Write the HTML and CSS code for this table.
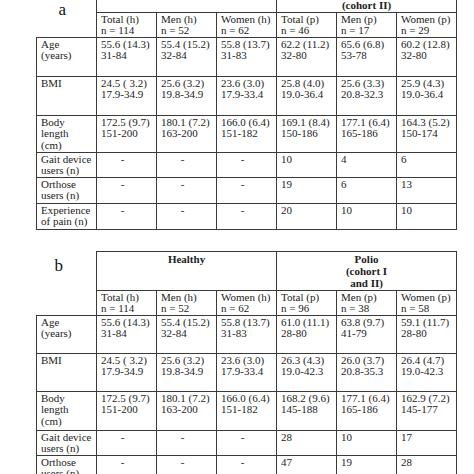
FILE: index.html
```html
<!DOCTYPE html>
<html>
<head>
<meta charset="utf-8">
<link rel="stylesheet" href="styles.css">
</head>
<body>
<div class="page">
  <table class="grid grid-a">
    <colgroup>
      <col class="c-label"><col class="c-data"><col class="c-data"><col class="c-data"><col class="c-data"><col class="c-data"><col class="c-last">
    </colgroup>
    <tr class="h-cut">
      <td class="tag tag-a" rowspan="2">a</td>
      <td class="group no-top" colspan="3"></td>
      <td class="group no-top" colspan="3">(cohort II)</td>
    </tr>
    <tr class="h24">
      <td>Total (h)<br>n = 114</td>
      <td>Men (h)<br>n = 52</td>
      <td>Women (h)<br>n = 62</td>
      <td>Total (p)<br>n = 46</td>
      <td>Men (p)<br>n = 17</td>
      <td>Women (p)<br>n = 29</td>
    </tr>
    <tr class="h39">
      <td>Age<br>(years)</td>
      <td>55.6 (14.3)<br>31-84</td>
      <td>55.4 (15.2)<br>32-84</td>
      <td>55.8 (13.7)<br>31-83</td>
      <td>62.2 (11.2)<br>32-80</td>
      <td>65.6 (6.8)<br>53-78</td>
      <td>60.2 (12.8)<br>32-80</td>
    </tr>
    <tr class="h39">
      <td>BMI</td>
      <td>24.5 ( 3.2)<br>17.9-34.9</td>
      <td>25.6 (3.2)<br>19.8-34.9</td>
      <td>23.6 (3.0)<br>17.9-33.4</td>
      <td>25.8 (4.0)<br>19.0-36.4</td>
      <td>25.6 (3.3)<br>20.8-32.3</td>
      <td>25.9 (4.3)<br>19.0-36.4</td>
    </tr>
    <tr class="h37">
      <td>Body<br>length<br>(cm)</td>
      <td>172.5 (9.7)<br>151-200</td>
      <td>180.1 (7.2)<br>163-200</td>
      <td>166.0 (6.4)<br>151-182</td>
      <td>169.1 (8.4)<br>150-186</td>
      <td>177.1 (6.4)<br>165-186</td>
      <td>164.3 (5.2)<br>150-174</td>
    </tr>
    <tr class="h25">
      <td>Gait device<br>users (n)</td>
      <td class="dash">-</td>
      <td class="dash">-</td>
      <td class="dash">-</td>
      <td>10</td>
      <td>4</td>
      <td>6</td>
    </tr>
    <tr class="h26">
      <td>Orthose<br>users (n)</td>
      <td class="dash">-</td>
      <td class="dash">-</td>
      <td class="dash">-</td>
      <td>19</td>
      <td>6</td>
      <td>13</td>
    </tr>
    <tr class="h26">
      <td>Experience<br>of pain (n)</td>
      <td class="dash">-</td>
      <td class="dash">-</td>
      <td class="dash">-</td>
      <td>20</td>
      <td>10</td>
      <td>10</td>
    </tr>
  </table>

  <table class="grid grid-b">
    <colgroup>
      <col class="c-label"><col class="c-data"><col class="c-data"><col class="c-data"><col class="c-data"><col class="c-data"><col class="c-last">
    </colgroup>
    <tr class="h39">
      <td class="tag tag-b" rowspan="2">b</td>
      <td class="group" colspan="3">Healthy</td>
      <td class="group" colspan="3">Polio<br>(cohort I<br>and II)</td>
    </tr>
    <tr class="h25">
      <td>Total (h)<br>n = 114</td>
      <td>Men (h)<br>n = 52</td>
      <td>Women (h)<br>n = 62</td>
      <td>Total (p)<br>n = 96</td>
      <td>Men (p)<br>n = 38</td>
      <td>Women (p)<br>n = 58</td>
    </tr>
    <tr class="h38">
      <td>Age<br>(years)</td>
      <td>55.6 (14.3)<br>31-84</td>
      <td>55.4 (15.2)<br>32-84</td>
      <td>55.8 (13.7)<br>31-83</td>
      <td>61.0 (11.1)<br>28-80</td>
      <td>63.8 (9.7)<br>41-79</td>
      <td>59.1 (11.7)<br>28-80</td>
    </tr>
    <tr class="h38">
      <td>BMI</td>
      <td>24.5 ( 3.2)<br>17.9-34.9</td>
      <td>25.6 (3.2)<br>19.8-34.9</td>
      <td>23.6 (3.0)<br>17.9-33.4</td>
      <td>26.3 (4.3)<br>19.0-42.3</td>
      <td>26.0 (3.7)<br>20.8-35.3</td>
      <td>26.4 (4.7)<br>19.0-42.3</td>
    </tr>
    <tr class="h39">
      <td>Body<br>length<br>(cm)</td>
      <td>172.5 (9.7)<br>151-200</td>
      <td>180.1 (7.2)<br>163-200</td>
      <td>166.0 (6.4)<br>151-182</td>
      <td>168.2 (9.6)<br>145-188</td>
      <td>177.1 (6.4)<br>165-186</td>
      <td>162.9 (7.2)<br>145-177</td>
    </tr>
    <tr class="h25">
      <td>Gait device<br>users (n)</td>
      <td class="dash">-</td>
      <td class="dash">-</td>
      <td class="dash">-</td>
      <td>28</td>
      <td>10</td>
      <td>17</td>
    </tr>
    <tr class="h26">
      <td>Orthose<br>users (n)</td>
      <td class="dash">-</td>
      <td class="dash">-</td>
      <td class="dash">-</td>
      <td>47</td>
      <td>19</td>
      <td>28</td>
    </tr>
  </table>
</div>
</body>
</html>
```

FILE: styles.css
```css
html, body {
  margin: 0;
  padding: 0;
  background: #ffffff;
}

body {
  width: 474px;
  height: 474px;
  overflow: hidden;
}

.page {
  padding-left: 36px;
  font-family: "Liberation Serif", "Times New Roman", serif;
  font-size: 11px;
  line-height: 11.5px;
  color: #1c1c1c;
}

.grid {
  border-collapse: collapse;
  table-layout: fixed;
  width: 420px;
}

.grid-b {
  margin-top: 21px;
}

.c-label, .c-data { width: 60px; }
.c-last { width: 60px; }

.grid td {
  border: 1px solid #3a3a3a;
  padding: 1px 2px 0 4px;
  vertical-align: top;
  text-align: left;
  white-space: nowrap;
  overflow: hidden;
}

.grid td.dash {
  text-align: center;
  padding-left: 0;
  padding-right: 8px;
}

.grid td.group {
  text-align: center;
  font-weight: bold;
  padding-left: 0;
  padding-right: 0;
  line-height: 12px;
}

.grid td.no-top {
  border-top: none;
  padding-top: 0;
  line-height: 11px;
}

.grid td.tag {
  border-top: none;
  border-left: none;
  font-size: 17px;
  line-height: 17px;
  font-weight: normal;
  color: #111;
}

.grid td.tag-a {
  padding: 1px 0 0 22px;
}

.grid td.tag-b {
  padding: 6px 0 0 18px;
}

.h-cut { height: 12px; }
.h24 { height: 24px; }
.h25 { height: 25px; }
.h26 { height: 26px; }
.h37 { height: 37px; }
.h38 { height: 38px; }
.h39 { height: 39px; }
```
